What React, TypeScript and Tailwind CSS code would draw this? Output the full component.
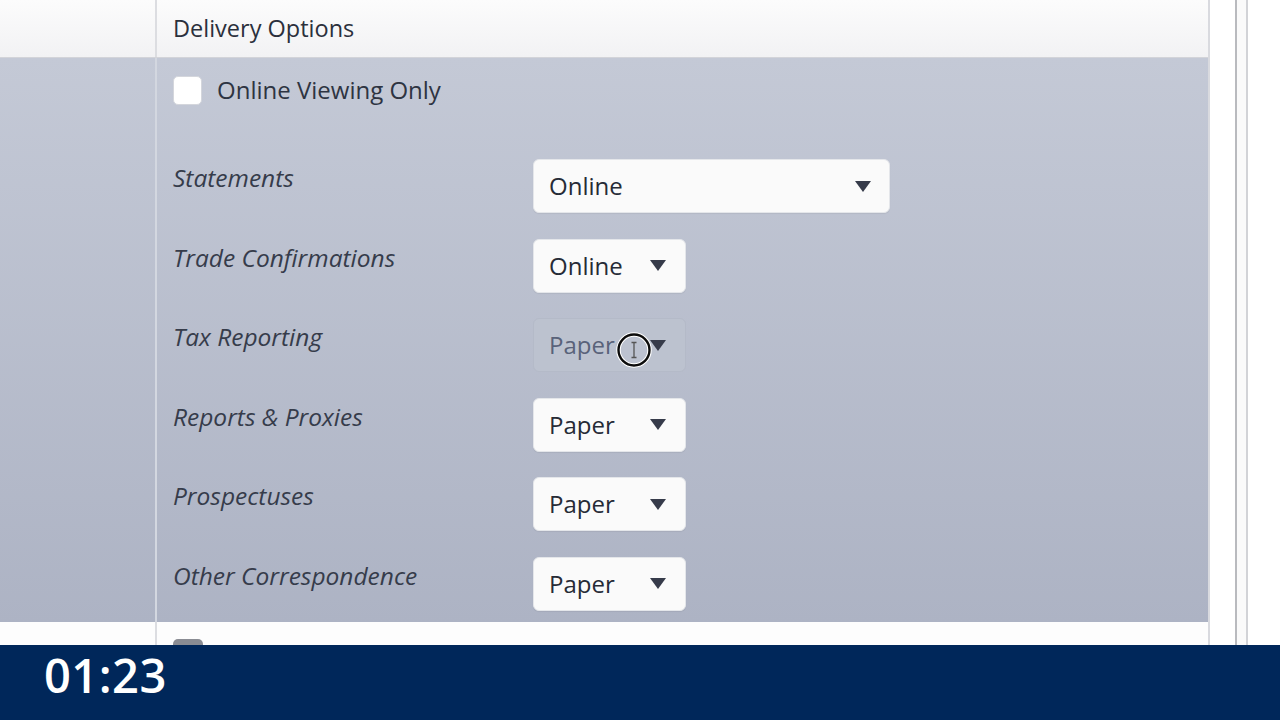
import React from "react";

const rows = [
  { label: "Statements", value: "Online", wide: true },
  { label: "Trade Confirmations", value: "Online" },
  { label: "Tax Reporting", value: "Paper", disabled: true },
  { label: "Reports & Proxies", value: "Paper" },
  { label: "Prospectuses", value: "Paper" },
  { label: "Other Correspondence", value: "Paper" },
];

function Caret() {
  return (
    <svg width="18" height="13" viewBox="0 0 18 13" className="shrink-0">
      <path d="M1 1h16L9 12z" fill="#363b4a" />
    </svg>
  );
}

function Select({ value, wide, disabled }: { value: string; wide?: boolean; disabled?: boolean }) {
  return (
    <div
      className={
        "h-[54px] flex items-center rounded-[6px] pl-[15px] " +
        (wide ? "w-[357px] pr-[17px] justify-between " : "w-[153px] pr-[18px] justify-between ") +
        (disabled
          ? "bg-[#bcc2cf] border border-[#b4bac8] text-[#59627a]"
          : "bg-[#fafafa] border border-[#e4e6ea] text-[#262b36] shadow-[0_1px_1px_rgba(0,0,0,0.06)]")
      }
    >
      <span className="text-[24px] leading-none">{value}</span>
      <Caret />
    </div>
  );
}

function Cursor() {
  return (
    <svg width="38" height="38" viewBox="0 0 38 38" className="absolute left-[615px] top-[331px]">
      <circle cx="19" cy="19" r="15.5" fill="rgba(190,196,210,0.35)" stroke="#ffffff" strokeWidth="4.5" />
      <circle cx="19" cy="19" r="15.5" fill="none" stroke="#0c0c0c" strokeWidth="2.4" />
      <path d="M16.5 11.5h5M16.5 26.5h5M19 12v14" stroke="#555" strokeWidth="1.3" fill="none" />
    </svg>
  );
}

export default function App() {
  return (
    <div
      className="relative w-[1280px] h-[720px] flex flex-col bg-white overflow-hidden"
      style={{ fontFamily: "'Open Sans', 'Noto Sans', sans-serif" }}
    >
      <div className="flex h-[645px]">
        <div className="w-[1210px] flex flex-col border-r-2 border-[#d9dadf]">
          {/* header */}
          <div className="flex h-[58px] bg-gradient-to-b from-[#fcfcfc] to-[#f2f2f4] border-b border-[#d3d4d9]">
            <div className="w-[155px]" />
            <div className="flex-1 border-l-2 border-[#dcdde1] flex items-center pl-[16px]">
              <span className="text-[23.5px] text-[#2b303c]">Delivery Options</span>
            </div>
          </div>
          {/* gray body */}
          <div className="flex h-[564px] bg-gradient-to-b from-[#c4c9d6] to-[#adb3c4]">
            <div className="w-[155px]" />
            <div className="flex-1 border-l-2 border-[#d3d7e0] pl-[16px] flex flex-col">
              <div className="flex items-center mt-[18px] h-[28px]">
                <div className="w-[29px] h-[29px] rounded-[5px] bg-white border border-[#d4d6dc]" />
                <span className="ml-[15px] text-[24px] text-[#2e3442]">Online Viewing Only</span>
              </div>
              <div className="mt-[55px] flex flex-col">
                {rows.map((r) => (
                  <div key={r.label} className="flex items-start h-[79.5px]">
                    <div className="w-[360px] mt-[5px] text-[24.5px] leading-[28px] italic text-[#363c4b]">
                      {r.label}
                    </div>
                    <Select value={r.value} wide={r.wide} disabled={r.disabled} />
                  </div>
                ))}
              </div>
            </div>
          </div>
          {/* white bottom */}
          <div className="flex flex-1 bg-[#fdfdfd]">
            <div className="w-[155px]" />
            <div className="flex-1 border-l-2 border-[#dcdde1] pl-[16px] flex items-end">
              <div className="w-[30px] h-[6px] rounded-t-[5px] bg-[#8a8c93]" />
            </div>
          </div>
        </div>
        <div className="w-[25px]" />
        <div className="w-[2px] bg-[#b9babe]" />
        <div className="w-[9px] bg-[#fafafa]" />
        <div className="w-[2px] bg-[#d2d3d7]" />
        <div className="flex-1" />
      </div>
      <div className="flex-1 bg-[#00275a] flex items-center pl-[44px] pb-[14px]">
        <span className="text-[47px] leading-none text-white font-semibold tracking-[0.5px]">01:23</span>
      </div>
      <Cursor />
    </div>
  );
}
